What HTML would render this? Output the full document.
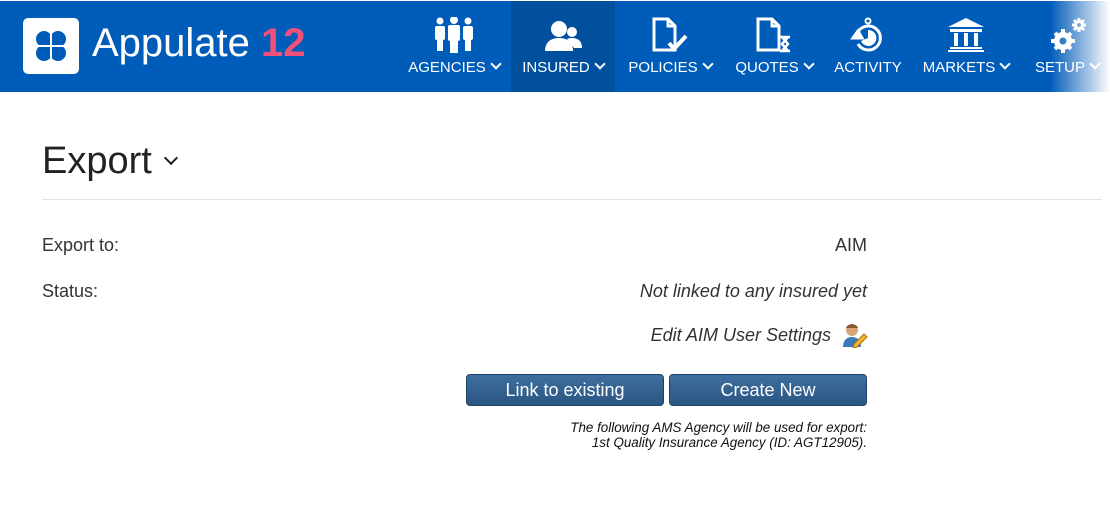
<!DOCTYPE html>
<html><head><meta charset="utf-8"><style>
*{margin:0;padding:0;box-sizing:border-box}
body{width:1110px;height:512px;background:#fff;font-family:"Liberation Sans",Arial,sans-serif;position:relative;overflow:hidden}
.hdr{position:absolute;left:0;top:1px;width:1110px;height:91px;background:#005cb9}
.fade{position:absolute;right:0;top:0;width:60px;height:91px;background:linear-gradient(90deg,rgba(255,255,255,0),#fff)}
.logo{position:absolute;left:23px;top:17px;width:56px;height:56px;background:#fff;border-radius:5px}
.brand{position:absolute;left:92px;top:20px;color:#fff;font-size:40px;font-family:"Liberation Sans",sans-serif}
.brand b{color:#f0507a;font-weight:bold}
.nav{position:absolute;top:0;height:91px;color:#fff;font-size:15px;text-align:center}
.nav .lbl{position:absolute;top:58px;left:0;right:0;white-space:nowrap}
.nav svg{position:absolute;top:16px;left:50%;transform:translateX(-50%)}
.chev{display:inline-block;width:8px;height:8px;border-right:2px solid #fff;border-bottom:2px solid #fff;transform:rotate(45deg);margin-left:6px;position:relative;top:-4px}
.act{background:#00509e}
.lab{position:absolute;left:42px;font-size:18px;color:#333}
.val{position:absolute;right:243px;font-size:18px;color:#333;white-space:nowrap}
.btn{position:absolute;top:374px;height:32px;border-radius:4px;background:linear-gradient(#3e6f9e,#2a5683);border:1px solid #1f4266;color:#fff;font-size:18px;text-align:center;line-height:30px}
</style></head><body>
<div class="hdr">
 <div class="logo"><svg width="56" height="56" viewBox="0 0 56 56"><g fill="#005cb9"><circle cx="21" cy="21" r="8"/><circle cx="35" cy="21" r="8"/><circle cx="21" cy="35" r="8"/><circle cx="35" cy="35" r="8"/><rect x="20" y="20" width="16" height="16"/></g><path d="M28 12V44M12 28H44" stroke="#fff" stroke-width="2"/></svg></div>
 <div class="brand">Appulate <b>12</b></div>
 <div class="nav" style="left:400px;width:108px"><svg width="40" height="36" viewBox="0 0 40 36" fill="#fff"><circle cx="6" cy="4" r="3.5"/><circle cx="20" cy="3" r="4"/><circle cx="34" cy="4" r="3.5"/><rect x="1" y="9" width="10" height="14" rx="2"/><rect x="14" y="8" width="12" height="16" rx="2"/><rect x="29" y="9" width="10" height="14" rx="2"/><rect x="3" y="22" width="6" height="12"/><rect x="16" y="23" width="8" height="13"/><rect x="31" y="22" width="6" height="12"/></svg><div class="lbl">AGENCIES<span class="chev"></span></div></div>
 <div class="nav act" style="left:511px;width:104px"><svg width="40" height="36" viewBox="0 0 40 36" fill="#fff"><circle cx="16" cy="12" r="8"/><path d="M2 34c0-9 6-13 14-13s14 4 14 13z"/><circle cx="29" cy="15" r="5"/><path d="M24 22c2-1 4-1 5-1 6 0 10 3 10 10H31z"/></svg><div class="lbl">INSURED<span class="chev"></span></div></div>
 <div class="nav" style="left:620px;width:100px"><svg width="40" height="36" viewBox="0 0 40 36" fill="none" stroke="#fff" stroke-width="3"><path d="M4 2h14l7 7v24H4z"/><path d="M18 2v7h7"/><path d="M19 26l5 6 12-13" stroke-width="4" stroke="#fff"/></svg><div class="lbl">POLICIES<span class="chev"></span></div></div>
 <div class="nav" style="left:728px;width:92px"><svg width="40" height="36" viewBox="0 0 40 36" fill="none" stroke="#fff" stroke-width="3"><path d="M4 2h14l7 7v24H4z"/><path d="M18 2v7h7"/><path d="M26 20h10M26 34h10M28 20l6 7-6 7M34 20l-6 7 6 7" stroke-width="2.5"/></svg><div class="lbl">QUOTES<span class="chev"></span></div></div>
 <div class="nav" style="left:828px;width:80px"><svg width="40" height="36" viewBox="0 0 40 36" fill="none" stroke="#fff" stroke-width="3"><circle cx="20" cy="4" r="2.5" stroke-width="2"/><path d="M10 15a12 12 0 1 1 0 12"/><path d="M5 21l5-7 4 7z" fill="#fff"/><path d="M20 13a8 8 0 1 1-7 11l7-3z" fill="#fff" stroke="none"/></svg><div class="lbl">ACTIVITY</div></div>
 <div class="nav" style="left:916px;width:100px"><svg width="40" height="36" viewBox="0 0 40 36" fill="#fff"><path d="M20 1L2 10h36z"/><rect x="4" y="12" width="32" height="3"/><rect x="8" y="16" width="4" height="13"/><rect x="18" y="16" width="4" height="13"/><rect x="28" y="16" width="4" height="13"/><rect x="4" y="30" width="32" height="2"/><rect x="2" y="33" width="36" height="2"/></svg><div class="lbl">MARKETS<span class="chev"></span></div></div>
 <div class="nav" style="left:1024px;width:86px"><svg width="40" height="36" viewBox="0 0 40 36" fill="#fff"><circle cx="16" cy="24" r="9"/><g stroke="#fff" stroke-width="4"><path d="M16 12v24M4 24h24M8 16l16 16M24 16L8 32"/></g><circle cx="16" cy="24" r="3.5" fill="#005cb9"/><circle cx="32" cy="8" r="5"/><g stroke="#fff" stroke-width="3"><path d="M32 1v14M25 8h14M27 3l10 10M37 3L27 13"/></g><circle cx="32" cy="8" r="2" fill="#005cb9"/></svg><div class="lbl">SETUP<span class="chev"></span></div></div>
 <div class="fade"></div>
</div>
<div style="position:absolute;left:42px;top:140px;font-size:38px;color:#222;font-family:'Liberation Sans',sans-serif">Export <span class="chev" style="border-color:#222;width:10px;height:10px;top:-10px;margin-left:4px"></span></div>
<div style="position:absolute;left:42px;top:199px;width:1060px;height:1px;background:#e5e5e5"></div>
<div class="lab" style="top:235px">Export to:</div><div class="val" style="top:235px">AIM</div>
<div class="lab" style="top:281px">Status:</div><div class="val" style="top:281px;font-style:italic">Not linked to any insured yet</div>
<div class="val" style="top:325px;font-style:italic;right:279px">Edit AIM User Settings</div>
<svg style="position:absolute;left:842px;top:322px" width="26" height="26" viewBox="0 0 26 26"><circle cx="10" cy="8" r="6" fill="#d9a37a"/><path d="M4 6c1-5 11-5 12 0z" fill="#8b5a2b"/><path d="M1 25c0-7 4-10 9-10s9 3 9 10z" fill="#3a7ab8"/><path d="M12 22l10-10 3 3-10 10-4 1z" fill="#f2b630" stroke="#b07010" stroke-width="1"/></svg>
<div class="btn" style="left:466px;width:198px">Link to existing</div>
<div class="btn" style="left:669px;width:198px">Create New</div>
<div style="position:absolute;right:243px;top:420px;font-size:13.4px;font-style:italic;color:#111;text-align:right;line-height:15px">The following AMS Agency will be used for export:<br>1st Quality Insurance Agency (ID: AGT12905).</div>
</body></html>
